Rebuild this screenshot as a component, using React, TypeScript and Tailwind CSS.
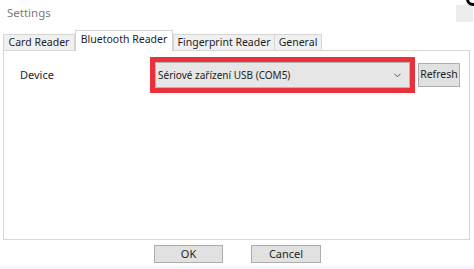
import { useState } from "react";

const TABS = [
  { key: "card", label: "Card Reader", w: "w-[72px]" },
  { key: "bt", label: "Bluetooth Reader", w: "w-[98px]" },
  { key: "fp", label: "Fingerprint Reader", w: "w-[102px]" },
  { key: "gen", label: "General", w: "w-[47px]" },
];

export default function App() {
  const [active, setActive] = useState("bt");

  return (
    <div className="relative w-[474px] h-[269px] overflow-hidden bg-white text-[#1e1e1e] font-['Noto_Sans','Liberation_Sans',sans-serif] text-[11px]">
      {/* window corner bits */}
      <div className="absolute right-[1px] top-[5px] w-[17px] h-[17px] bg-[#ededed]" />
      <div className="absolute -right-[6px] -top-[8px] w-[14px] h-[14px] rounded-full border-[3px] border-black bg-white" />

      <div className="h-[29px] pl-[7px] pt-[4px] text-[#7a7a7a] text-[11.5px]">Settings</div>

      {/* tab strip */}
      <div className="flex items-end h-[21px] pl-[3px] text-[10.5px]">
        {TABS.map((t, i) => {
          const on = t.key === active;
          const prevOff = i > 0 && TABS[i - 1].key !== active;
          return (
            <button
              key={t.key}
              onClick={() => setActive(t.key)}
              className={
                on
                  ? `${t.w} h-[21px] -mb-px relative z-10 bg-white border border-b-0 border-[#d3d3d3] flex items-center justify-center pb-[3px] whitespace-nowrap`
                  : `${t.w} h-[16px] bg-[#f0f0f0] border border-b-0 border-[#d6d6d6] ${prevOff ? "border-l-0" : ""} flex items-center justify-center whitespace-nowrap`
              }
            >
              {t.label}
            </button>
          );
        })}
      </div>

      {/* panel */}
      <div className="ml-[3px] mr-[4px] h-[190px] border border-[#d6d6d6] bg-white">
        <div className="flex items-center mt-[6px]">
          <div className="w-[146px] pl-[16px]">Device</div>
          <div className="w-[265px] h-[36px] border-[5px] border-[#e8313b]">
            <div className="h-full bg-[#e6e6e6] border border-[#b5b5b5] flex items-center justify-between pl-[2px] pr-[8px] text-[10px]">
              <span>Sériové zařízení USB (COM5)</span>
              <svg width="7" height="5" viewBox="0 0 7 5">
                <path d="M0.5 0.8 L3.5 3.8 L6.5 0.8" fill="none" stroke="#555" strokeWidth="1" />
              </svg>
            </div>
          </div>
          <button className="ml-[3px] w-[42px] h-[24px] bg-[#e1e1e1] border border-[#adadad] flex items-center justify-center text-[10.5px]">
            Refresh
          </button>
        </div>
      </div>

      {/* footer buttons */}
      <div className="flex pl-[154px] gap-[28px] mt-[5px]">
        <button className="w-[69px] h-[18px] bg-[#e1e1e1] border border-[#adadad] flex items-center justify-center">OK</button>
        <button className="w-[70px] h-[18px] bg-[#e1e1e1] border border-[#adadad] flex items-center justify-center">Cancel</button>
      </div>
      <div className="absolute left-0 right-0 bottom-0 h-[3px] bg-[#f4f6fa]" />
    </div>
  );
}
